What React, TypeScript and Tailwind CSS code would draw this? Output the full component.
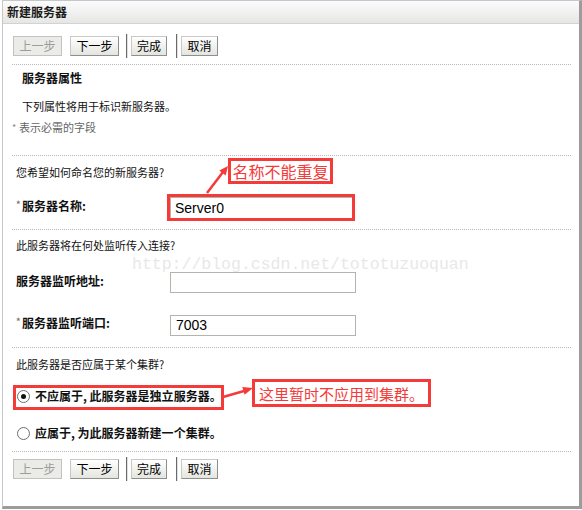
import React from "react";

const CJK = '"Noto Sans CJK SC", "Noto Sans", sans-serif';

function Btn({ children, w, disabled }: { children: React.ReactNode; w: string; disabled?: boolean }) {
  return (
    <div
      className={
        "h-[20px] flex items-center justify-center text-[12px] leading-none border " +
        w +
        " " +
        (disabled
          ? "bg-[#ebebe7] text-[#9c9c9c] border-[#c2c2be]"
          : "bg-gradient-to-b from-[#ffffff] to-[#e4e4e0] text-black border-[#8e8e8a] border-t-[#c8c8c4] border-l-[#c8c8c4]")
      }
    >
      {children}
    </div>
  );
}

function Sep() {
  return <div className="h-[24px] w-[2px] bg-[#6a6a6a] border-r border-r-[#e0e0e0]" />;
}

function ButtonRow() {
  return (
    <div className="h-[24px] flex items-center pl-[1px]">
      <Btn w="w-[49px]" disabled>
        上一步
      </Btn>
      <div className="w-[8px]" />
      <Btn w="w-[49px]">下一步</Btn>
      <div className="w-[7px]" />
      <Sep />
      <div className="w-[3px]" />
      <Btn w="w-[36px]">完成</Btn>
      <div className="w-[9px]" />
      <Sep />
      <div className="w-[3px]" />
      <Btn w="w-[37px]">取消</Btn>
    </div>
  );
}

function Dotted({ mt }: { mt: string }) {
  return <div className={"border-t border-dotted border-[#b8b8b8] " + mt} />;
}

function Star() {
  return <span className="text-[9px] text-[#777] self-start mt-[1px] w-[6px]">*</span>;
}

function Radio({ checked }: { checked?: boolean }) {
  return (
    <div className="w-[13px] h-[13px] rounded-full border border-[#6e6e6e] bg-white flex items-center justify-center">
      {checked ? <div className="w-[5px] h-[5px] rounded-full bg-[#111]" /> : null}
    </div>
  );
}

export default function App() {
  return (
    <div className="w-[582px] h-[510px] bg-white relative overflow-hidden" style={{ fontFamily: CJK }}>
      <div className="ml-[2px] w-[580px] h-[509px] border-l border-t border-l-[#c4c8cc] border-t-[#c4c8cc] border-r-[3px] border-b-[3px] border-r-[#9c9c9c] border-b-[#9c9c9c] bg-white">
        <div className="h-[23px] border-b border-[#d2d4d2] bg-gradient-to-b from-[#fbfbfb] to-[#e6e7e5] flex items-center pl-[4px]">
          <span className="text-[12px] font-bold text-[#1a1a1a] leading-none">新建服务器</span>
        </div>

        <div className="pl-[9px] pr-[8px]">
          <div className="mt-[10px]">
            <ButtonRow />
          </div>
          <Dotted mt="mt-[6px]" />

          <div className="mt-[5px] h-[16px] flex items-center pl-[10px] text-[12px] font-bold text-[#111]">服务器属性</div>
          <div className="mt-[12px] h-[16px] flex items-center pl-[10px] text-[11px] text-[#111]">
            下列属性将用于标识新服务器。
          </div>
          <div className="mt-[5px] h-[16px] flex items-center text-[11px] text-[#666]">
            <span className="text-[9px] self-start mt-[2px] w-[4px] text-[#888]">*</span>
            <span className="ml-[3px]">表示必需的字段</span>
          </div>

          <Dotted mt="mt-[20px]" />
          <div className="mt-[8px] h-[16px] flex items-center pl-[4px] text-[11px] text-[#111]">
            您希望如何命名您的新服务器?
          </div>

          <div className="mt-[17px] h-[22px] flex items-center pl-[4px]">
            <div className="w-[154px] flex items-center text-[12px] font-bold text-[#111] mt-[-4px]">
              <Star />
              服务器名称:
            </div>
            <div className="w-[184px] h-[22px] border border-[#b4b4ac] bg-white flex items-center pl-[4px] text-[14px] text-black" style={{ fontFamily: '"Liberation Sans", sans-serif' }}>
              Server0
            </div>
          </div>

          <Dotted mt="mt-[10px]" />
          <div className="mt-[7px] h-[16px] flex items-center pl-[4px] text-[11px] text-[#111]">
            此服务器将在何处监听传入连接?
          </div>

          <div className="mt-[19px] h-[21px] flex items-center pl-[4px]">
            <div className="w-[154px] flex items-center text-[12px] font-bold text-[#111] mt-[-4px]">服务器监听地址:</div>
            <div className="w-[186px] h-[21px] border border-[#b4b4ac] bg-white" />
          </div>

          <div className="mt-[22px] h-[21px] flex items-center pl-[4px]">
            <div className="w-[154px] flex items-center text-[12px] font-bold text-[#111] mt-[-6px]">
              <Star />
              服务器监听端口:
            </div>
            <div className="w-[186px] h-[21px] border border-[#b4b4ac] bg-white flex items-center pl-[5px] text-[14px] text-black" style={{ fontFamily: '"Liberation Sans", sans-serif' }}>
              7003
            </div>
          </div>

          <Dotted mt="mt-[11px]" />
          <div className="mt-[8px] h-[16px] flex items-center pl-[4px] text-[11px] text-[#111]">
            此服务器是否应属于某个集群?
          </div>

          <div className="mt-[16px] h-[16px] flex items-center pl-[5px] gap-[5px] text-[12px] font-bold text-[#111]">
            <Radio checked />
            <span>不应属于, 此服务器是独立服务器。</span>
          </div>
          <div className="mt-[21px] h-[16px] flex items-center pl-[5px] gap-[5px] text-[12px] font-bold text-[#111]">
            <Radio />
            <span>应属于, 为此服务器新建一个集群。</span>
          </div>

          <Dotted mt="mt-[10px]" />
          <div className="mt-[5px]">
            <ButtonRow />
          </div>
        </div>
      </div>

      {/* watermark */}
      <div
        className="absolute left-[132px] top-[254px] text-[16.5px] leading-[22px] text-[#e8e8e8] whitespace-nowrap"
        style={{ fontFamily: '"Liberation Mono", monospace' }}
      >
        http://blog.csdn.net/tototuzuoquan
      </div>

      {/* annotations */}
      <div className="absolute left-[167px] top-[194px] w-[188px] h-[27px] border-[3px] border-[#f53a3a]" />
      <div className="absolute left-[228px] top-[158px] w-[105px] h-[26px] border-[3px] border-[#f53a3a] bg-white flex items-center justify-center text-[16px] leading-none text-[#f53a3a]">
        名称不能重复
      </div>

      <div className="absolute left-[13px] top-[385px] w-[211px] h-[25px] border-[3px] border-[#f53a3a]" />
      <div className="absolute left-[252px] top-[379px] w-[179px] h-[28px] border-[3px] border-[#f53a3a] bg-white flex items-center justify-center text-[15px] leading-none text-[#f53a3a]">
        这里暂时不应用到集群。
      </div>

      <svg className="absolute left-0 top-0" width="582" height="510" viewBox="0 0 582 510">
        <line x1="207" y1="193" x2="223" y2="172" stroke="#f53a3a" strokeWidth="2.5" />
        <polygon points="228,166 225.7,175.6 219.3,170.6" fill="#f53a3a" />
        <line x1="223" y1="397" x2="244" y2="391" stroke="#f53a3a" strokeWidth="2.5" />
        <polygon points="253,388 244.6,394.7 242.3,387.1" fill="#f53a3a" />
      </svg>
    </div>
  );
}
